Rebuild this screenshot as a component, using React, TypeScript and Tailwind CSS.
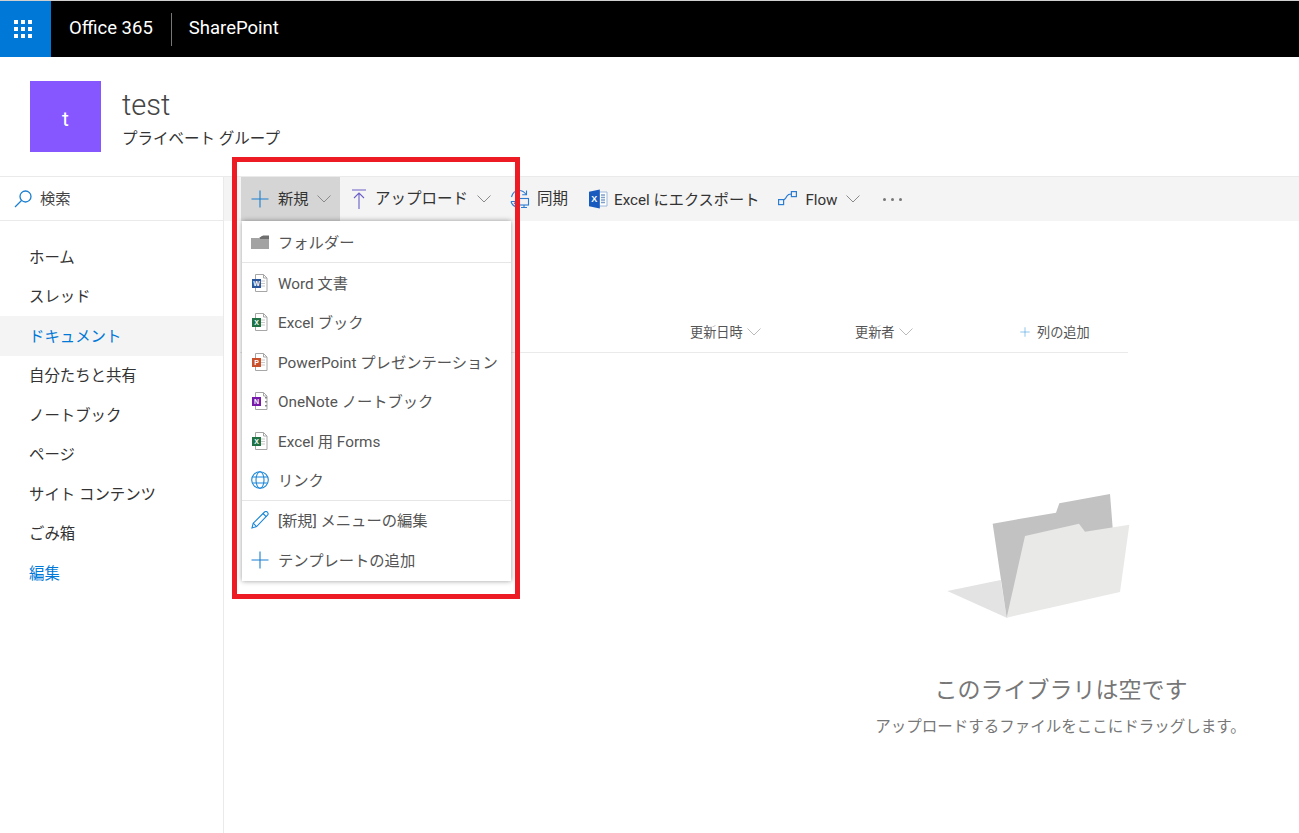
import type { ReactNode } from "react";

const FONT = "font-['Roboto','Noto_Sans_CJK_JP',sans-serif]";

const NAV = ["ホーム", "スレッド", "ドキュメント", "自分たちと共有", "ノートブック", "ページ", "サイト コンテンツ", "ごみ箱", "編集"];

function Chevron({ className = "" }: { className?: string }) {
  return (
    <svg width="14" height="8" viewBox="0 0 14 8" fill="none" stroke="currentColor" strokeWidth="1" className={className}>
      <path d="M.5.5 7 7 13.5.5" />
    </svg>
  );
}

function Plus({ size = 18, className = "" }: { size?: number; className?: string }) {
  return (
    <svg width={size} height={size} viewBox="0 0 18 18" fill="none" stroke="currentColor" strokeWidth="1.1" className={className}>
      <path d="M9 .5v17M.5 9h17" />
    </svg>
  );
}

// page icon used by Word / Excel / PowerPoint / OneNote rows
function DocIcon({ color, letter, notebook }: { color: string; letter: string; notebook?: boolean }) {
  return (
    <svg width="18" height="18" viewBox="0 0 18 18">
      <path d="M4.5.5h8l3.5 3.5v13.5H4.5z" fill="#fff" stroke="#a6a6a6" />
      <path d="M12.5.5V4H16" fill="none" stroke="#a6a6a6" />
      {notebook ? (
        <path d="M15 5v1.5M15 9v1.5M15 13v1.5" stroke="#8a8a8a" strokeWidth="2" />
      ) : (
        <path d="M10 7h4M10 9.5h4M10 12h4" stroke="#c8c8c8" />
      )}
      <rect x="1" y="5" width="9" height="9" fill={color} />
      <text x="5.5" y="12.2" fontSize="7" fontWeight="700" fill="#fff" textAnchor="middle" fontFamily="Liberation Sans, sans-serif">
        {letter}
      </text>
    </svg>
  );
}

function FolderIcon() {
  return (
    <svg width="18" height="14" viewBox="0 0 18 14">
      <path d="M0 3h8l3-2h7v3H0z" fill="#6f6f6f" />
      <path d="M0 3h18v11H0z" fill="#a3a3a3" />
      <path d="M9 3l3-2.500h6V4h-9z" fill="#6f6f6f" />
    </svg>
  );
}

function GlobeIcon() {
  return (
    <svg width="18" height="18" viewBox="0 0 18 18" fill="none" stroke="#1a86d6" strokeWidth="1.1">
      <circle cx="9" cy="9" r="8.300" />
      <ellipse cx="9" cy="9" rx="4" ry="8.300" />
      <path d="M1.500 6h15M1.500 12h15" />
    </svg>
  );
}

function PencilIcon() {
  return (
    <svg width="18" height="18" viewBox="0 0 18 18" fill="none" stroke="#1a86d6" strokeWidth="1.1">
      <path d="M1 17l1.200-4.800L13.500 1c1-.8 2.300-.6 3 .3.800.9.800 2 0 2.900L5.600 15.600z" />
      <path d="M2.200 12.200l3.400 3.400M12 2.500l3.400 3.400" />
    </svg>
  );
}

function SyncIcon() {
  return (
    <svg width="20" height="20" viewBox="0 0 20 20" fill="none" stroke="#2b7cd3" strokeWidth="1.1">
      <path d="M1.500 8C2.500 4 5.500 1.500 9 1.500c3 0 5.500 1.500 7 4" />
      <path d="M16.500 1.500v4.300h-4.300" />
      <path d="M1 12.500h5l-2 2.500M1 12.500c.5 1.800 2.500 4.500 5.500 5.500" />
      <rect x="9.500" y="9.500" width="9" height="6.500" />
      <path d="M14 16v2.500M11 18.500h6" />
    </svg>
  );
}

function ExcelExportIcon() {
  return (
    <svg width="20" height="20" viewBox="0 0 20 20">
      <path d="M11 3h8v14h-8z" fill="#fff" stroke="#9db8dc" />
      <path d="M13 6h4M13 8.500h4M13 11h4M13 13.500h4" stroke="#7f9fcc" strokeWidth="1.300" />
      <path d="M1 2.800 11.800.5v19L1 17.200z" fill="#185abd" />
      <text x="6.200" y="13.400" fontSize="9" fontWeight="700" fill="#fff" textAnchor="middle" fontFamily="Liberation Sans, sans-serif">
        X
      </text>
    </svg>
  );
}

function FlowIcon() {
  return (
    <svg width="19" height="15" viewBox="0 0 19 15" fill="none" stroke="#2b7cd3" strokeWidth="1.200">
      <rect x=".6" y="8.600" width="5" height="5" />
      <rect x="13.400" y=".6" width="5" height="5" />
      <path d="M5.600 9c2-1 2.500-2 3.400-4 .8-1.500 2.500-2 4.400-2" />
    </svg>
  );
}

function ToolButton({ icon, label, chevron, labelClass = "ml-[7px] text-[15.5px]", chevronClass = "ml-[9px]" }: { icon: ReactNode; label: string; chevron?: boolean; labelClass?: string; chevronClass?: string }) {
  return (
    <div className="flex h-full items-center">
      <span className="flex justify-center">{icon}</span>
      <span className={`pt-[2px] text-[#333] ${labelClass}`}>{label}</span>
      {chevron ? <Chevron className={`text-[#8a8a8a] ${chevronClass}`} /> : null}
    </div>
  );
}

function MenuItem({ icon, label }: { icon: ReactNode; label: string }) {
  return (
    <div className="flex h-[39.5px] items-center pl-[9px]">
      <span className="flex w-[18px] justify-center">{icon}</span>
      <span className="ml-[9px] whitespace-nowrap pt-[3px] text-[15.3px] text-[#555]">{label}</span>
    </div>
  );
}

function NewMenu() {
  return (
    <div className="absolute left-[18px] top-[44px] z-10 w-[269px] bg-white py-[1px] shadow-[0_0_5px_rgba(0,0,0,0.4)]">
      <div className="flex h-[40px] items-center pl-[9px]">
        <FolderIcon />
        <span className="ml-[9px] pt-[2px] text-[15.3px] text-[#555]">フォルダー</span>
      </div>
      <div className="h-px bg-[#e6e6e6]" />
      <MenuItem icon={<DocIcon color="#2b579a" letter="W" />} label="Word 文書" />
      <MenuItem icon={<DocIcon color="#217346" letter="X" />} label="Excel ブック" />
      <MenuItem icon={<DocIcon color="#c8502d" letter="P" />} label="PowerPoint プレゼンテーション" />
      <MenuItem icon={<DocIcon color="#7719aa" letter="N" notebook />} label="OneNote ノートブック" />
      <MenuItem icon={<DocIcon color="#217346" letter="X" />} label="Excel 用 Forms" />
      <div className="flex h-[39px] items-center pl-[9px]">
        <GlobeIcon />
        <span className="ml-[9px] pt-[3px] text-[15.3px] text-[#555]">リンク</span>
      </div>
      <div className="h-px bg-[#e6e6e6]" />
      <MenuItem icon={<PencilIcon />} label="[新規] メニューの編集" />
      <MenuItem icon={<Plus className="text-[#1a7fd0]" />} label="テンプレートの追加" />
    </div>
  );
}

export default function App() {
  return (
    <div className={`relative flex h-[833px] w-[1299px] flex-col overflow-hidden bg-white ${FONT}`}>
      <header className="flex h-[57px] shrink-0 items-stretch border-t border-[#d0d0d0] bg-black text-white">
        <div className="flex w-[51px] items-center justify-center bg-[#0078d7]">
          <div className="mr-[6px] grid grid-cols-3 gap-[3px]">
            {Array.from({ length: 9 }).map((_, i) => (
              <span key={i} className="h-[4px] w-[4px] bg-white" />
            ))}
          </div>
        </div>
        <div className="flex items-center pl-[18px] text-[18.5px]">
          <span>Office 365</span>
          <span className="ml-[18px] mr-[17px] h-[33px] w-px bg-[#777]" />
          <span>SharePoint</span>
        </div>
      </header>

      <div className="flex h-[119px] shrink-0 items-center pl-[30px]">
        <div className="flex h-[71px] w-[71px] items-center justify-center bg-[#8656ff] pt-[6px] text-[21px] text-white">t</div>
        <div className="ml-[21px] pt-[4px]">
          <div className="text-[29px] font-light leading-[38px] text-[#444]">test</div>
          <div className="pt-[3px] text-[15.5px] leading-[24px] text-[#333]">プライベート グループ</div>
        </div>
      </div>

      <div className="flex min-h-0 flex-1 border-t border-[#eaeaea]">
        <aside className="w-[224px] shrink-0 border-r border-[#eaeaea]">
          <div className="flex h-[44px] items-center border-b border-[#eaeaea] pl-[14px] text-[15.3px] text-[#444]">
            <svg width="18" height="18" viewBox="0 0 18 18" fill="none" stroke="#1a7fd0" strokeWidth="1.300">
              <circle cx="11.500" cy="6.500" r="5.500" />
              <path d="M7.500 10.500 1 17" />
            </svg>
            <span className="ml-[8px] pt-[2px]">検索</span>
          </div>
          <nav className="pt-[16px]">
            {NAV.map((item) => (
              <div
                key={item}
                className={`flex h-[39.5px] items-center pl-[29px] pt-[3px] text-[15.4px] ${
                  item === "ドキュメント" ? "bg-[#f4f4f4] text-[#0078d7]" : item === "編集" ? "text-[#0078d7]" : "text-[#333]"
                }`}
              >
                {item}
              </div>
            ))}
          </nav>
        </aside>

        <main className="relative min-w-0 flex-1">
          <div className="flex h-[44px] items-stretch bg-[#f4f4f4] pl-[17px]">
            <div className="flex w-[99px] items-center bg-[#d5d5d5] pl-[10px]">
              <Plus className="text-[#1a7fd0]" />
              <span className="ml-[9px] text-[15.3px] text-[#333]">新規</span>
              <Chevron className="ml-[8px] text-[#8a8a8a]" />
            </div>
            <div className="ml-[12px] flex items-center">
              <ToolButton
                icon={
                  <svg width="14" height="20" viewBox="0 0 14 20" fill="none" stroke="#6a5fc8" strokeWidth="1.100">
                    <path d="M0 1h14M7 4v16M2 9l5-5 5 5" />
                  </svg>
                }
                label="アップロード"
                labelClass="ml-[9px] text-[15.5px]"
                chevron
              />
              <div className="ml-[19px]">
                <ToolButton icon={<SyncIcon />} label="同期" />
              </div>
              <div className="ml-[20px]">
                <ToolButton icon={<ExcelExportIcon />} label="Excel にエクスポート" labelClass="ml-[6px] text-[15.2px]" />
              </div>
              <div className="ml-[19px]">
                <ToolButton icon={<FlowIcon />} label="Flow" labelClass="ml-[8px] text-[15.2px]" chevron chevronClass="ml-[8px]" />
              </div>
              <div className="ml-[23px] flex gap-[5px]">
                <span className="h-[3px] w-[3px] rounded-full bg-[#777]" />
                <span className="h-[3px] w-[3px] rounded-full bg-[#777]" />
                <span className="h-[3px] w-[3px] rounded-full bg-[#777]" />
              </div>
            </div>
          </div>

          <div className="ml-[16px] mt-[89px] flex h-[43px] w-[888px] items-center border-b border-[#eaeaea] pt-[3px] text-[13.2px] text-[#555]">
            <div className="ml-[450px] flex w-[165px] items-center">
              更新日時
              <Chevron className="ml-[4px] text-[#bbb]" />
            </div>
            <div className="flex w-[165px] items-center">
              更新者
              <Chevron className="ml-[4px] text-[#bbb]" />
            </div>
            <div className="flex items-center">
              <Plus size={10} className="text-[#4a9fe0]" />
              <span className="ml-[7px]">列の追加</span>
            </div>
          </div>

          <div className="ml-[640px] mt-[128px] flex w-[386px] flex-col items-center">
            <svg width="220" height="150" viewBox="0 0 660 450" className="mr-[34px]">
              <path d="M52 330 212 297 230 410z" fill="#e3e3e3" />
              <path d="M188 128 378 95 388 67 540 39 548 140 400 300 230 410z" fill="#c2c2c2" />
              <path d="M285 165 447 128 465 152 598 131 570 333 230 410z" fill="#e9e9e8" />
            </svg>
            <div className="ml-[8px] mt-[45px] text-[23px] leading-[30px] text-[#777]">このライブラリは空です</div>
            <div className="ml-[7px] mt-[10px] whitespace-nowrap text-[15.5px] leading-[22px] text-[#777]">
              アップロードするファイルをここにドラッグします。
            </div>
          </div>

          <NewMenu />
        </main>
      </div>

      {/* red annotation frame drawn over the screenshot */}
      <div className="absolute left-[232px] top-[157px] z-20 h-[442px] w-[288px] border-[5px] border-[#ed1c24]" />
    </div>
  );
}
